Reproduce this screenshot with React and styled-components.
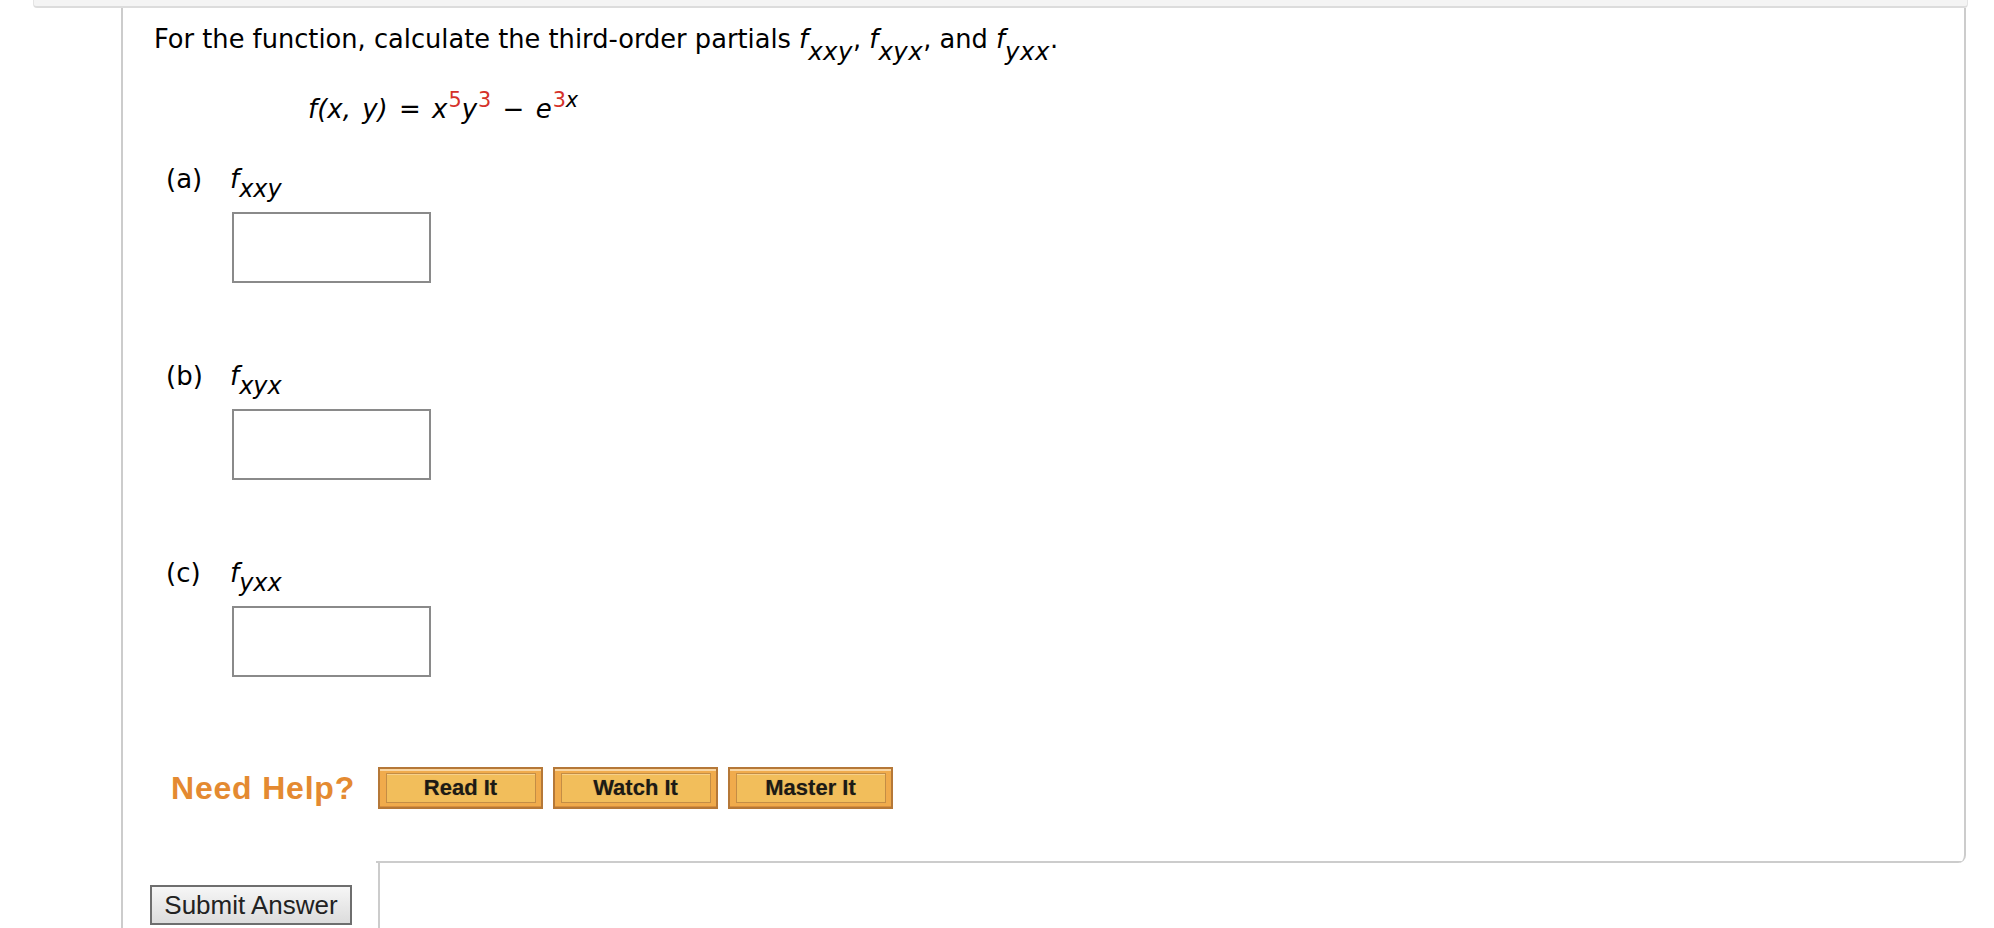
import React from 'react';
import styled, { createGlobalStyle } from 'styled-components';

const GlobalStyle = createGlobalStyle`
    body {
        margin: 0;
        background: #ffffff;
        color: #000000;
        font-family: "DejaVu Sans", Verdana, sans-serif;
    }
`;

const TopBar = styled.div`
    margin-left: 33px;
    width: 1933px;
    height: 6px;
    background: #f4f4f4;
    border: 1px solid #e4e4e4;
    border-top: none;
    border-bottom: 2px solid #dcdcdc;
    border-radius: 0 0 4px 4px;
`;

const Frame = styled.div`
    margin-left: 121px;
    width: 1845px;
    border-left: 2px solid #cccccc;
    box-sizing: border-box;
`;

const QuestionPanel = styled.section`
    height: 855px;
    box-sizing: border-box;
    padding: 15px 0 0 31px;
    border-right: 2px solid #cccccc;
    border-bottom-right-radius: 8px;
    background: linear-gradient(#cccccc, #cccccc) no-repeat right bottom / calc(100% - 253px) 2px;
`;

const Prompt = styled.p`
    margin: 0;
    font-size: 25.7px;
    line-height: 32px;
`;

const Formula = styled.p`
    margin: 38px 0 0 154px;
    font-size: 26px;
    line-height: 32px;
    font-style: italic;
    word-spacing: 3px;
`;

const Var = styled.i`
    font-style: italic;
`;

const Sub = styled.sub`
    font-size: ${({ $size }) => $size || '0.95em'};
    font-style: italic;
    letter-spacing: ${({ $spacing }) => $spacing || '0.5px'};
    line-height: 0;
    vertical-align: ${({ $drop }) => $drop || '-12px'};
`;

const Sup = styled.sup`
    font-size: 0.8em;
    line-height: 0;
    vertical-align: 11px;
    margin-left: 1px;
`;

const Red = styled.span`
    color: #d5322a;
    font-style: normal;
`;

const PartList = styled.div`
    margin-top: 38px;
    display: flex;
    flex-direction: column;
    gap: 77px;
`;

const Part = styled.div`
    display: flex;
    flex-direction: column;
`;

const PartLabel = styled.div`
    display: flex;
    height: 32px;
    padding-left: 12px;
    font-size: 26px;
    line-height: 32px;
`;

const Letter = styled.span`
    width: 64px;
`;

const AnswerBox = styled.input`
    margin: 17px 0 0 78px;
    width: 199px;
    height: 71px;
    box-sizing: border-box;
    border: 2px solid #8a8a8a;
    border-radius: 0;
    padding: 0 8px;
    font-size: 22px;
    outline: none;
`;

const HelpRow = styled.div`
    margin: 90px 0 0 17px;
    display: flex;
    align-items: center;
    height: 42px;
`;

const NeedHelp = styled.span`
    font-family: "Liberation Sans", Arial, sans-serif;
    font-weight: bold;
    font-size: 32px;
    letter-spacing: 0.8px;
    color: #e48a31;
    margin-right: 23px;
`;

const HelpButtons = styled.div`
    display: flex;
    gap: 10px;
`;

const HelpButton = styled.button`
    width: 165px;
    height: 42px;
    padding: 0;
    box-sizing: border-box;
    border: 2px solid #b57838;
    border-radius: 0;
    background: #f0ab4c;
    box-shadow: inset 0 2px 0 #f9d6a2, inset 0 -1px 0 #d98e3a;
    display: flex;
    align-items: center;
    justify-content: center;
    cursor: pointer;
`;

const HelpInner = styled.span`
    width: 150px;
    height: 30px;
    box-sizing: border-box;
    border: 1px solid #c48d45;
    background: #f2be5b;
    box-shadow: inset 0 1px 0 #f7d08a;
    display: flex;
    align-items: center;
    justify-content: center;
    font-family: "Liberation Sans", Arial, sans-serif;
    font-weight: bold;
    font-size: 22px;
    color: #1c1a16;
    text-shadow: 0 0 1px rgba(0, 0, 0, 0.35);
`;

const Footer = styled.div`
    display: grid;
    grid-template-columns: 255px 1fr;
    height: 65px;
`;

const SubmitCell = styled.div`
    padding: 22px 0 0 27px;
`;

const SubmitButton = styled.button`
    width: 202px;
    height: 40px;
    padding: 0;
    box-sizing: border-box;
    border: 2px solid #6e6e6e;
    border-radius: 0;
    background: linear-gradient(#f6f6f6, #dcdcdc);
    font-family: "Liberation Sans", Arial, sans-serif;
    font-size: 26px;
    color: #222222;
`;

const ResponseArea = styled.div`
    border-left: 2px solid #cccccc;
`;

const parts = [
    { letter: 'a', sub: 'xxy' },
    { letter: 'b', sub: 'xyx' },
    { letter: 'c', sub: 'yxx' },
];

const helpButtons = ['Read It', 'Watch It', 'Master It'];

function App() {
    return (
        <>
            <GlobalStyle />
            <TopBar />
            <Frame>
                <QuestionPanel>
                    <Prompt>
                        For the function, calculate the third-order partials{' '}
                        <Var>f</Var><Sub>xxy</Sub>, <Var>f</Var><Sub>xyx</Sub>, and{' '}
                        <Var>f</Var><Sub>yxx</Sub>.
                    </Prompt>

                    <Formula>
                        f(x, y) = x<Sup><Red>5</Red></Sup>y<Sup><Red>3</Red></Sup> − e
                        <Sup><Red>3</Red>x</Sup>
                    </Formula>

                    <PartList>
                        {parts.map((p) => (
                            <Part key={p.letter}>
                                <PartLabel>
                                    <Letter>({p.letter})</Letter>
                                    <span>
                                        <Var>f</Var>
                                        <Sub $size="0.92em" $drop="-9px" $spacing="0">{p.sub}</Sub>
                                    </span>
                                </PartLabel>
                                <AnswerBox type="text" aria-label={`f ${p.sub}`} />
                            </Part>
                        ))}
                    </PartList>

                    <HelpRow>
                        <NeedHelp>Need Help?</NeedHelp>
                        <HelpButtons>
                            {helpButtons.map((label) => (
                                <HelpButton key={label}>
                                    <HelpInner>{label}</HelpInner>
                                </HelpButton>
                            ))}
                        </HelpButtons>
                    </HelpRow>
                </QuestionPanel>

                <Footer>
                    <SubmitCell>
                        <SubmitButton>Submit Answer</SubmitButton>
                    </SubmitCell>
                    <ResponseArea />
                </Footer>
            </Frame>
        </>
    );
}

export default App;
